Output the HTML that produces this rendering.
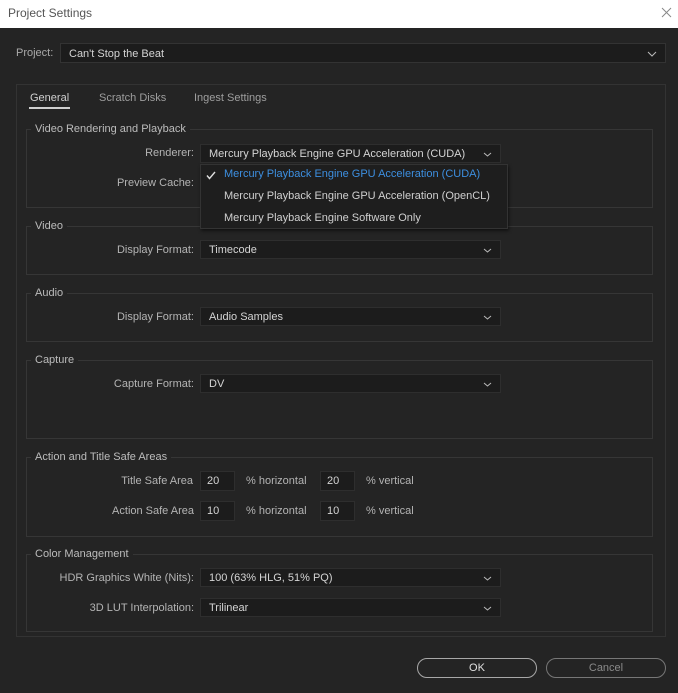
<!DOCTYPE html>
<html><head><style>
*{margin:0;padding:0;box-sizing:border-box}
body{width:678px;height:693px;background:#242424;font-family:"Liberation Sans",sans-serif;font-size:11px;color:#c8c8c8;position:relative;overflow:hidden}
.a{position:absolute;white-space:nowrap}
.tb{left:0;top:0;width:678px;height:28px;background:#fff;color:#555;font-size:12px}
.box{position:absolute;border:1px solid #363636}
.gl{position:absolute;background:#242424;padding:0 4px;color:#bcbcbc;font-size:11px;white-space:nowrap}
.lbl{position:absolute;text-align:right;color:#b4b4b4;white-space:nowrap}
.dd{position:absolute;background:#1c1c1c;border:1px solid #2e2e2e;height:19px;padding:3px 8px 0;color:#d4d4d4;font-size:11px;white-space:nowrap}
.dd svg{position:absolute;right:8px;top:7px}
.in{position:absolute;background:#1c1c1c;border:1px solid #2e2e2e;width:35px;height:20px;padding:3px 6px;color:#d4d4d4}
.btn{position:absolute;top:658px;width:120px;height:20px;border:1.5px solid #a8a8a8;border-radius:10px;text-align:center;line-height:18px;font-size:11px}
</style></head><body>
<div class="a tb"><span style="position:absolute;left:8px;top:6px">Project Settings</span>
<svg style="position:absolute;left:661px;top:7px" width="11" height="11"><path d="M1 1L10 10M10 1L1 10" stroke="#888" stroke-width="1"/></svg></div>

<div class="a" style="left:16px;top:47px;color:#aaa">Project:</div>
<div class="dd" style="left:60px;top:43px;width:606px;height:20px;border-color:#333;padding-top:4px">Can't Stop the Beat<svg width="10" height="6"><path d="M1 1L5 5L9 1" stroke="#bbb" fill="none"/></svg></div>

<div class="box" style="left:16px;top:84px;width:650px;height:553px;border-color:#333"></div>
<div class="a" style="left:30px;top:92px;color:#d0d0d0">General</div>
<div class="a" style="left:29px;top:107px;width:41px;height:2px;background:#cfcfcf"></div>
<div class="a" style="left:99px;top:92px;color:#9e9e9e">Scratch Disks</div>
<div class="a" style="left:194px;top:92px;color:#9e9e9e">Ingest Settings</div>

<div class="box" style="left:26px;top:129px;width:627px;height:79px"></div>
<div class="gl" style="left:31px;top:123px">Video Rendering and Playback</div>
<div class="lbl" style="left:60px;width:134px;top:147px">Renderer:</div>
<div class="lbl" style="left:60px;width:134px;top:177px">Preview Cache:</div>
<div class="dd" style="left:200px;top:144px;width:301px">Mercury Playback Engine GPU Acceleration (CUDA)<svg width="9" height="5"><path d="M1 1L4.5 4L8 1" stroke="#bbb" fill="none"/></svg></div>

<div class="box" style="left:26px;top:226px;width:627px;height:49px"></div>
<div class="gl" style="left:31px;top:220px">Video</div>
<div class="lbl" style="left:60px;width:134px;top:244px">Display Format:</div>
<div class="dd" style="left:200px;top:240px;width:301px">Timecode<svg width="9" height="5"><path d="M1 1L4.5 4L8 1" stroke="#bbb" fill="none"/></svg></div>

<div class="box" style="left:26px;top:293px;width:627px;height:49px"></div>
<div class="gl" style="left:31px;top:287px">Audio</div>
<div class="lbl" style="left:60px;width:134px;top:311px">Display Format:</div>
<div class="dd" style="left:200px;top:307px;width:301px">Audio Samples<svg width="9" height="5"><path d="M1 1L4.5 4L8 1" stroke="#bbb" fill="none"/></svg></div>

<div class="box" style="left:26px;top:360px;width:627px;height:79px"></div>
<div class="gl" style="left:31px;top:354px">Capture</div>
<div class="lbl" style="left:60px;width:134px;top:378px">Capture Format:</div>
<div class="dd" style="left:200px;top:374px;width:301px">DV<svg width="9" height="5"><path d="M1 1L4.5 4L8 1" stroke="#bbb" fill="none"/></svg></div>

<div class="box" style="left:26px;top:457px;width:627px;height:80px"></div>
<div class="gl" style="left:31px;top:451px">Action and Title Safe Areas</div>
<div class="lbl" style="left:60px;width:133px;top:475px">Title Safe Area</div>
<div class="in" style="left:200px;top:471px">20</div>
<div class="a" style="left:246px;top:475px;color:#b4b4b4">% horizontal</div>
<div class="in" style="left:320px;top:471px">20</div>
<div class="a" style="left:366px;top:475px;color:#b4b4b4">% vertical</div>
<div class="lbl" style="left:60px;width:134px;top:505px">Action Safe Area</div>
<div class="in" style="left:200px;top:501px">10</div>
<div class="a" style="left:246px;top:505px;color:#b4b4b4">% horizontal</div>
<div class="in" style="left:320px;top:501px">10</div>
<div class="a" style="left:366px;top:505px;color:#b4b4b4">% vertical</div>

<div class="box" style="left:26px;top:554px;width:627px;height:78px"></div>
<div class="gl" style="left:31px;top:548px">Color Management</div>
<div class="lbl" style="left:40px;width:154px;top:572px">HDR Graphics White (Nits):</div>
<div class="dd" style="left:200px;top:568px;width:301px">100 (63% HLG, 51% PQ)<svg width="9" height="5"><path d="M1 1L4.5 4L8 1" stroke="#bbb" fill="none"/></svg></div>
<div class="lbl" style="left:40px;width:154px;top:602px">3D LUT Interpolation:</div>
<div class="dd" style="left:200px;top:598px;width:301px">Trilinear<svg width="9" height="5"><path d="M1 1L4.5 4L8 1" stroke="#bbb" fill="none"/></svg></div>

<div class="a" style="left:200px;top:164px;width:308px;height:65px;background:#1e1e1e;border:1px solid #333;box-shadow:1px 2px 3px rgba(0,0,0,.5)">
<svg style="position:absolute;left:5px;top:6px" width="10" height="9"><path d="M1 4.5L3.5 7.5L9 1" stroke="#ddd" stroke-width="1.4" fill="none"/></svg>
<div class="a" style="left:23px;top:3px;color:#3d8fe0">Mercury Playback Engine GPU Acceleration (CUDA)</div>
<div class="a" style="left:23px;top:25px;color:#d0d0d0">Mercury Playback Engine GPU Acceleration (OpenCL)</div>
<div class="a" style="left:23px;top:47px;color:#d0d0d0">Mercury Playback Engine Software Only</div>
</div>

<div class="btn" style="left:417px;color:#e0e0e0">OK</div>
<div class="btn" style="left:546px;color:#8a8a8a;border-color:#777">Cancel</div>
</body></html>
